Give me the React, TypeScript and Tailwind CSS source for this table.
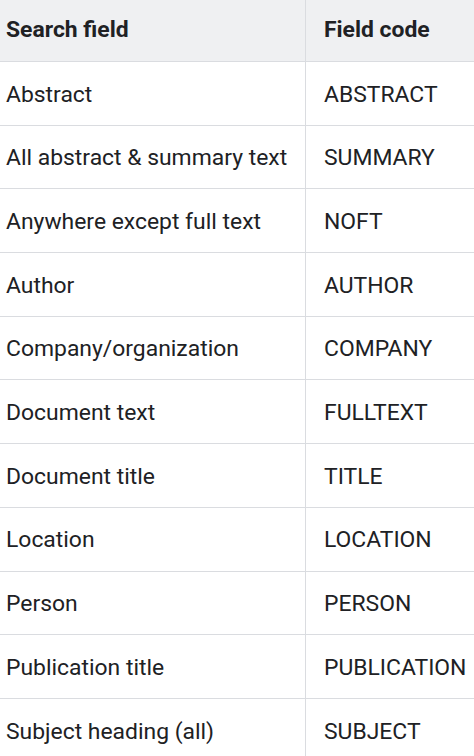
const rows: [string, string][] = [
    ['Abstract', 'ABSTRACT'],
    ['All abstract & summary text', 'SUMMARY'],
    ['Anywhere except full text', 'NOFT'],
    ['Author', 'AUTHOR'],
    ['Company/organization', 'COMPANY'],
    ['Document text', 'FULLTEXT'],
    ['Document title', 'TITLE'],
    ['Location', 'LOCATION'],
    ['Person', 'PERSON'],
    ['Publication title', 'PUBLICATION'],
    ['Subject heading (all)', 'SUBJECT'],
]

export default function App() {
    return (
        <div className="w-[474px] h-[756px] overflow-hidden bg-white text-[#202124] text-[22.9px] font-['Roboto',sans-serif]">
            <div className="flex h-[62px] bg-[#eff0f2] border-b border-[#dadce0] font-bold">
                <div className="w-[306px] flex items-center pl-[6px] border-r border-[#dadce0]">Search field</div>
                <div className="flex-1 flex items-center pl-[18px]">Field code</div>
            </div>
            {rows.map(([field, code]) => (
                <div key={code} className="flex h-[63.7px] border-b border-[#dadce0]">
                    <div className="w-[306px] flex items-center pl-[6px] pt-[3px] border-r border-[#dadce0]">{field}</div>
                    <div className="flex-1 flex items-center pl-[18px] pt-[3px]">{code}</div>
                </div>
            ))}
        </div>
    )
}
